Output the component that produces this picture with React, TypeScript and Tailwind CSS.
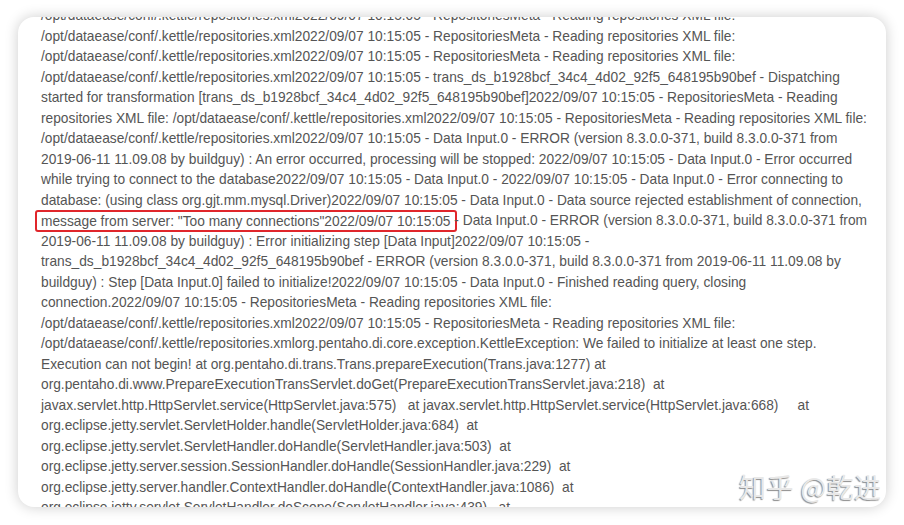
const lines: string[] = [
  '/opt/dataease/conf/.kettle/repositories.xml2022/09/07 10:15:05 - RepositoriesMeta - Reading repositories XML file:',
  '/opt/dataease/conf/.kettle/repositories.xml2022/09/07 10:15:05 - RepositoriesMeta - Reading repositories XML file:',
  '/opt/dataease/conf/.kettle/repositories.xml2022/09/07 10:15:05 - RepositoriesMeta - Reading repositories XML file:',
  '/opt/dataease/conf/.kettle/repositories.xml2022/09/07 10:15:05 - trans_ds_b1928bcf_34c4_4d02_92f5_648195b90bef - Dispatching',
  'started for transformation [trans_ds_b1928bcf_34c4_4d02_92f5_648195b90bef]2022/09/07 10:15:05 - RepositoriesMeta - Reading',
  'repositories XML file: /opt/dataease/conf/.kettle/repositories.xml2022/09/07 10:15:05 - RepositoriesMeta - Reading repositories XML file:',
  '/opt/dataease/conf/.kettle/repositories.xml2022/09/07 10:15:05 - Data Input.0 - ERROR (version 8.3.0.0-371, build 8.3.0.0-371 from',
  '2019-06-11 11.09.08 by buildguy) : An error occurred, processing will be stopped: 2022/09/07 10:15:05 - Data Input.0 - Error occurred',
  'while trying to connect to the database2022/09/07 10:15:05 - Data Input.0 - 2022/09/07 10:15:05 - Data Input.0 - Error connecting to',
  'database: (using class org.gjt.mm.mysql.Driver)2022/09/07 10:15:05 - Data Input.0 - Data source rejected establishment of connection,',
  'HIGHLIGHT',
  '2019-06-11 11.09.08 by buildguy) : Error initializing step [Data Input]2022/09/07 10:15:05 -',
  'trans_ds_b1928bcf_34c4_4d02_92f5_648195b90bef - ERROR (version 8.3.0.0-371, build 8.3.0.0-371 from 2019-06-11 11.09.08 by',
  'buildguy) : Step [Data Input.0] failed to initialize!2022/09/07 10:15:05 - Data Input.0 - Finished reading query, closing',
  'connection.2022/09/07 10:15:05 - RepositoriesMeta - Reading repositories XML file:',
  '/opt/dataease/conf/.kettle/repositories.xml2022/09/07 10:15:05 - RepositoriesMeta - Reading repositories XML file:',
  '/opt/dataease/conf/.kettle/repositories.xmlorg.pentaho.di.core.exception.KettleException: We failed to initialize at least one step.',
  'Execution can not begin! at org.pentaho.di.trans.Trans.prepareExecution(Trans.java:1277) at',
  'org.pentaho.di.www.PrepareExecutionTransServlet.doGet(PrepareExecutionTransServlet.java:218)  at',
  'javax.servlet.http.HttpServlet.service(HttpServlet.java:575)   at javax.servlet.http.HttpServlet.service(HttpServlet.java:668)     at',
  'org.eclipse.jetty.servlet.ServletHolder.handle(ServletHolder.java:684)  at',
  'org.eclipse.jetty.servlet.ServletHandler.doHandle(ServletHandler.java:503)  at',
  'org.eclipse.jetty.server.session.SessionHandler.doHandle(SessionHandler.java:229)  at',
  'org.eclipse.jetty.server.handler.ContextHandler.doHandle(ContextHandler.java:1086)  at',
  'org.eclipse.jetty.servlet.ServletHandler.doScope(ServletHandler.java:439)   at',
]

export default function App() {
  return (
    <div className="relative w-[904px] h-[525px] bg-white overflow-hidden pt-[17px] pl-[18px]">
      {/* log card */}
      <div className="w-[868px] h-[490px] bg-white rounded-[16px] overflow-hidden shadow-[0_0_14px_rgba(0,0,0,0.2)]">
        <div className="-mt-[11px] pl-[23px] text-[13.75px] leading-[20.5px] text-[#555555] font-['Liberation_Sans',Arial,sans-serif]">
          {lines.map((line, i) =>
            line === 'HIGHLIGHT' ? (
              <div key={i} className="whitespace-pre">
                <span className="border-2 border-[#e0262b] rounded-[3px] py-[1.5px] px-[4px] -mx-[6px]">
                  message from server: "Too many connections"2022/09/07 10:15:05
                </span>
                {' - Data Input.0 - ERROR (version 8.3.0.0-371, build 8.3.0.0-371 from'}
              </div>
            ) : (
              <div key={i} className="whitespace-pre">
                {line}
              </div>
            )
          )}
        </div>
      </div>

      {/* watermark */}
      <div className="absolute left-[739px] top-[471px] text-[27px] leading-[32px] tracking-[0.5px] text-[#e8e8e8] [text-shadow:-1px_1px_1px_rgba(0,0,0,0.45)] font-['Noto_Sans_CJK_SC',sans-serif] whitespace-pre">
        知乎 @乾进
      </div>
    </div>
  )
}
